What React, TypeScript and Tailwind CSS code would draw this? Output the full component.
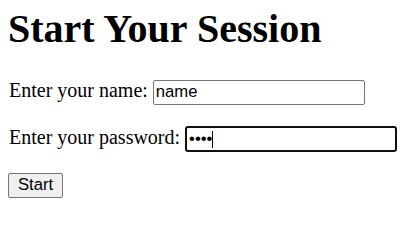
export default function App() {
  return (
    <div className="min-h-screen bg-white px-[8px] pt-[6px] font-['Liberation_Serif',serif] text-black">
      <h1 className="text-[40px] font-bold leading-[45px]">Start Your Session</h1>

      <form className="flex flex-col items-start">
        <div className="mt-[28px] flex items-baseline gap-[5px] text-[20px] leading-[22px]">
          <label htmlFor="name" className="pl-px">Enter your name:</label>
          <input
            id="name"
            type="text"
            defaultValue="name"
            className="h-[25px] w-[212px] rounded-[2px] border border-[#767676] px-[2px] font-['Liberation_Sans',Arial,sans-serif] text-[16.67px] text-black outline-none"
          />
        </div>

        <div className="mt-[21px] flex items-baseline gap-[5px] text-[20px] leading-[22px]">
          <label htmlFor="password" className="pl-px">Enter your password:</label>
          <div className="relative">
            <input
              id="password"
              type="password"
              defaultValue="abcd"
              className="h-[26px] w-[212px] rounded-[3px] border-2 border-[#101010] px-[2px] font-['Liberation_Sans',Arial,sans-serif] text-[16.67px] text-black outline-none"
            />
            {/* caret */}
            <span className="pointer-events-none absolute left-[27px] top-[5px] h-[17px] w-px bg-black" />
          </div>
        </div>

        <button
          type="button"
          className="mt-[21px] h-[25px] w-[55px] rounded-[2px] border border-[#767676] bg-[#efefef] font-['Liberation_Sans',Arial,sans-serif] text-[16.67px] leading-none text-black"
        >
          Start
        </button>
      </form>
    </div>
  );
}
